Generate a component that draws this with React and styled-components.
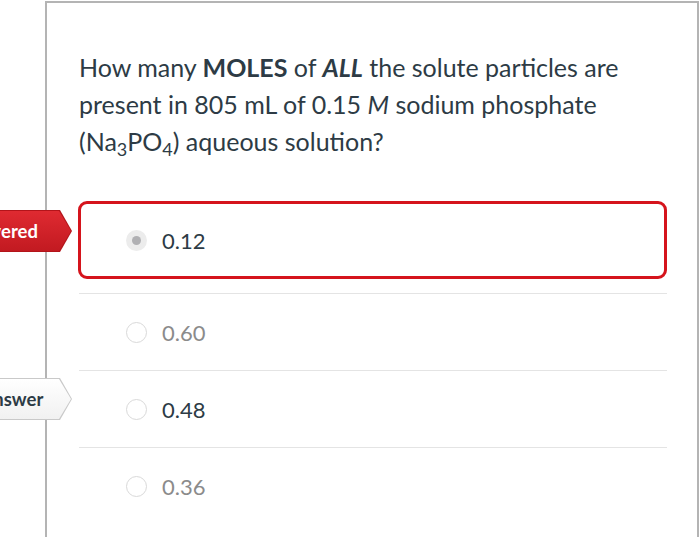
import React from "react";
import styled, { createGlobalStyle } from "styled-components";

const Global = createGlobalStyle`
  html, body {
    margin: 0;
    padding: 0;
    background: #ffffff;
    overflow: hidden;
  }
  body {
    font-family: Lato, "Noto Sans", "Liberation Sans", sans-serif;
    color: #2d3b45;
  }
`;

const Page = styled.div`
  width: 700px;
  height: 537px;
  overflow: hidden;
  padding: 1px 0 0 45px;
  box-sizing: border-box;
`;

const Panel = styled.div`
  width: 654px;
  height: 560px;
  box-sizing: border-box;
  border: 2px solid #b4b4b4;
  border-bottom: none;
  padding: 46px 30px 0 32px;
  background: #fff;
`;

const Question = styled.div`
  font-size: 25px;
  line-height: 37px;
  color: #2d3b45;
  margin-bottom: 41px;

  sub {
    font-size: 0.72em;
    line-height: 0;
    vertical-align: -0.3em;
  }
`;

const Answers = styled.div`
  display: flex;
  flex-direction: column;
`;

const Row = styled.div`
  position: relative;
  border-bottom: 1px solid #e4e4e4;
  padding-bottom: ${(p) => (p.$selected ? "14px" : "0")};

  &:last-child {
    border-bottom: none;
  }
`;

const AnswerBox = styled.div`
  display: flex;
  align-items: center;
  gap: 15px;
  box-sizing: border-box;
  height: ${(p) => (p.$selected ? "78px" : "76px")};
  padding-left: ${(p) => (p.$selected ? "45px" : "47px")};
  border: ${(p) => (p.$selected ? "3px solid #d5141c" : "none")};
  border-radius: 9px;
  margin-left: ${(p) => (p.$selected ? "-1px" : "0")};
`;

const Radio = styled.span`
  width: 21px;
  height: 21px;
  border-radius: 50%;
  box-sizing: border-box;
  flex: none;
  display: flex;
  align-items: center;
  justify-content: center;
  background: ${(p) => (p.$checked ? "#ececec" : "#fff")};
  border: ${(p) => (p.$checked ? "none" : "1.5px solid #d9d9d9")};

  &::after {
    content: "";
    display: ${(p) => (p.$checked ? "block" : "none")};
    width: 9px;
    height: 9px;
    border-radius: 50%;
    background: #b0b0b3;
  }
`;

const Label = styled.span`
  font-size: 22px;
  color: ${(p) => (p.$muted ? "#8b8b8b" : "#2d3b45")};
`;

const Tag = styled.div`
  position: absolute;
  top: ${(p) => p.$top}px;
  right: calc(100% + 7px);
  width: 174px;
  height: 42px;
  box-sizing: border-box;
  padding-right: 12px;
  display: flex;
  align-items: center;
  justify-content: center;
  font-size: 18.5px;
  font-weight: 700;
  color: ${(p) => (p.$variant === "wrong" ? "#ffffff" : "#2d3b45")};
  background: ${(p) => (p.$variant === "wrong" ? "#b3141a" : "#c9c9c9")};
  clip-path: polygon(0 0, calc(100% - 12px) 0, 100% 50%, calc(100% - 12px) 100%, 0 100%);
  z-index: 2;

  &::before {
    content: "";
    position: absolute;
    inset: 1px;
    background: ${(p) =>
      p.$variant === "wrong"
        ? "linear-gradient(#df2a31, #c21a21)"
        : "linear-gradient(#ffffff, #f1f1f1)"};
    clip-path: polygon(0 0, calc(100% - 12px) 0, 100% 50%, calc(100% - 12px) 100%, 0 100%);
    z-index: -1;
  }
`;

const answers = [
  { value: "0.12", checked: true, muted: false, tag: { text: "You Answered", variant: "wrong", top: 9 } },
  { value: "0.60", muted: true },
  { value: "0.48", muted: false, tag: { text: "Correct Answer", variant: "correct", top: 7 } },
  { value: "0.36", muted: true },
];

export default function App() {
  return (
    <>
      <Global />
      <Page>
        <Panel>
          <Question>
            How many <b>MOLES</b> of <b><i>ALL</i></b> the solute particles are present in 805 mL
            of 0.15 <i>M</i> sodium phosphate (Na<sub>3</sub>PO<sub>4</sub>) aqueous solution?
          </Question>
          <Answers>
            {answers.map((a) => (
              <Row key={a.value} $selected={a.checked}>
                {a.tag && (
                  <Tag $variant={a.tag.variant} $top={a.tag.top}>
                    {a.tag.text}
                  </Tag>
                )}
                <AnswerBox $selected={a.checked}>
                  <Radio $checked={a.checked} />
                  <Label $muted={a.muted}>{a.value}</Label>
                </AnswerBox>
              </Row>
            ))}
          </Answers>
        </Panel>
      </Page>
    </>
  );
}
